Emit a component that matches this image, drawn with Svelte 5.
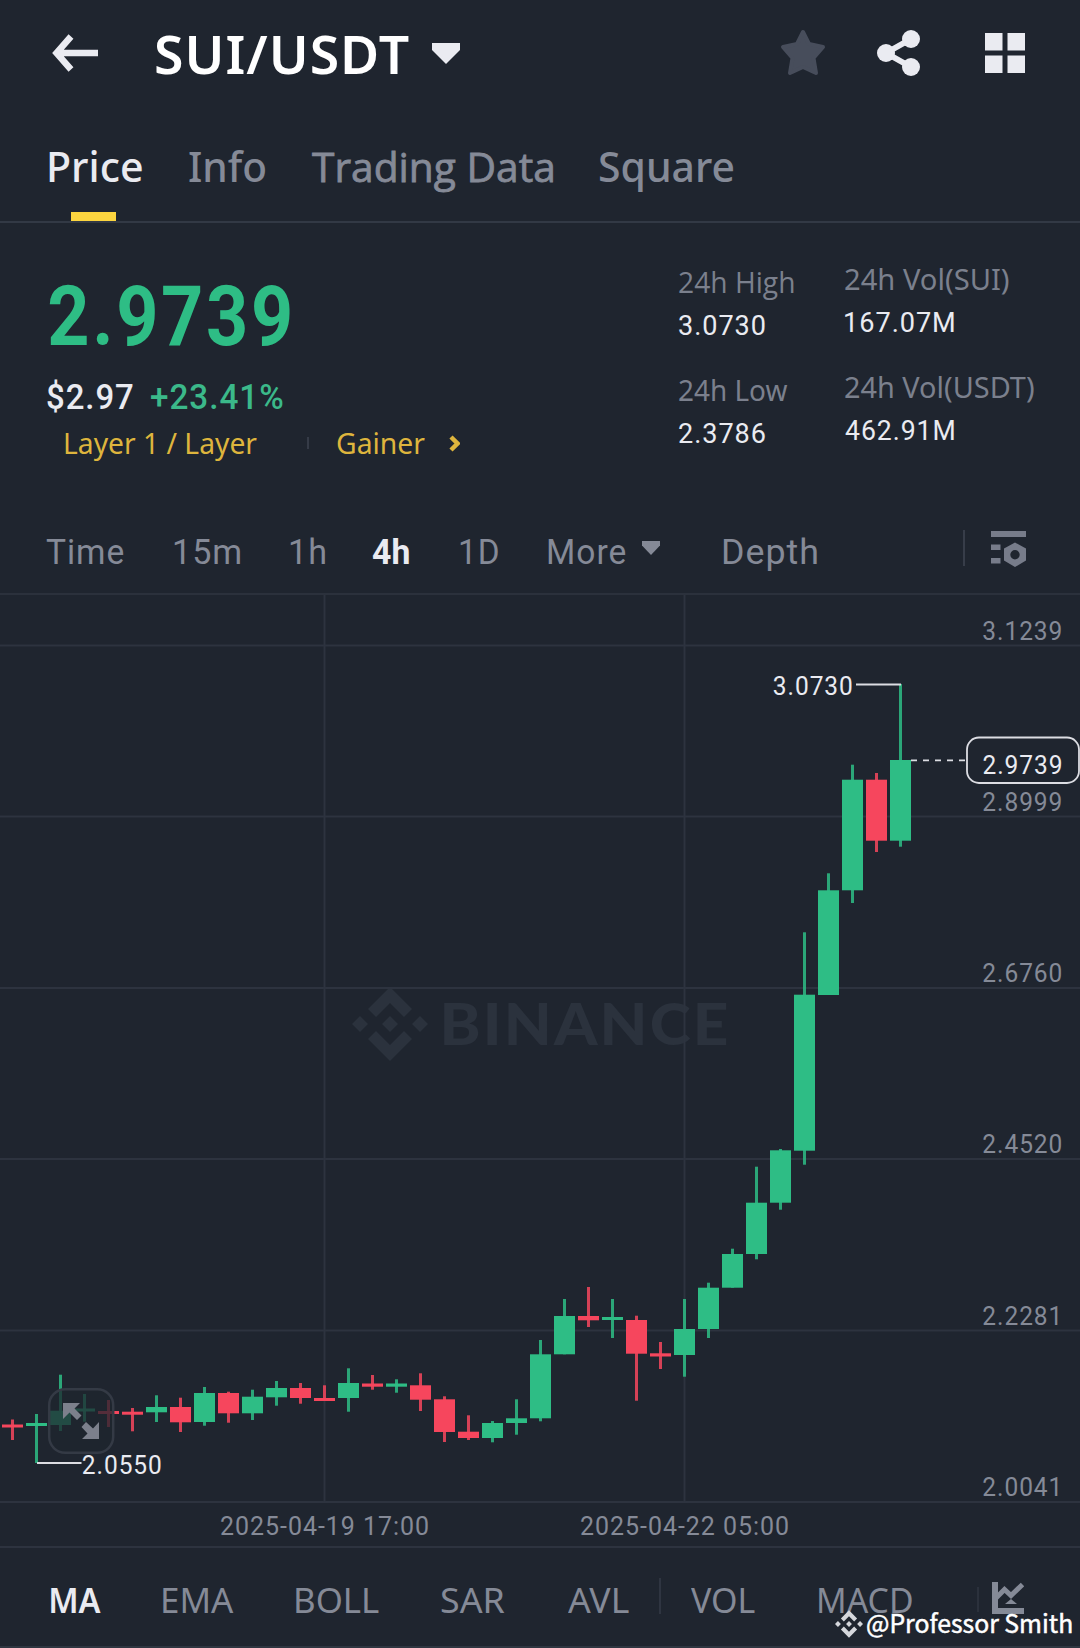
<script lang="ts">
  type Label = { text: string; width: number; open?: boolean };
  // vertical positions on the chart canvas: high, body top, body bottom, low
  type Candle = [number, number, number, number, "up" | "down"];

  const tabs: Label[] = [
    { text: "Price", width: 93 },
    { text: "Info", width: 76 },
    { text: "Trading Data", width: 241, open: true },
    { text: "Square", width: 133.5 },
  ];

  const stats: { label: Label; value: Label }[][] = [
    [
      { label: { text: "24h High", width: 115, open: true }, value: { text: "3.0730", width: 86 } },
      { label: { text: "24h Low", width: 109 }, value: { text: "2.3786", width: 86 } },
    ],
    [
      { label: { text: "24h Vol(SUI)", width: 164 }, value: { text: "167.07M", width: 109 } },
      { label: { text: "24h Vol(USDT)", width: 189 }, value: { text: "462.91M", width: 109 } },
    ],
  ];

  const intervals: Label[] = [
    { text: "Time", width: 78 },
    { text: "15m", width: 66 },
    { text: "1h", width: 35 },
    { text: "4h", width: 37 },
    { text: "1D", width: 38 },
    { text: "More", width: 78 },
  ];

  const indicators: Label[] = [
    { text: "MA", width: 50 },
    { text: "EMA", width: 71 },
    { text: "BOLL", width: 83 },
    { text: "SAR", width: 64 },
    { text: "AVL", width: 61 },
    { text: "VOL", width: 64 },
    { text: "MACD", width: 93 },
  ];

  const levels = [
    { price: "3.1239", y: 645.5 },
    { price: "2.8999", y: 816.5 },
    { price: "2.6760", y: 988 },
    { price: "2.4520", y: 1159 },
    { price: "2.2281", y: 1330.5 },
    { price: "2.0041", y: 1502 },
  ];

  const dates = [
    { text: "2025-04-19 17:00", x: 324.5 },
    { text: "2025-04-22 05:00", x: 684.5 },
  ];

  const candles: Candle[] = [
    [1419.5, 1424.5, 1427.5, 1440, "down"],
    [1414, 1423, 1426, 1463, "up"],
    [1374.7, 1410.7, 1425, 1431, "up"],
    [1394, 1408.5, 1411.5, 1421.7, "up"],
    [1400, 1411, 1414, 1427, "down"],
    [1408, 1411.7, 1414.7, 1431.3, "down"],
    [1395.3, 1407, 1412.3, 1422, "up"],
    [1397.7, 1407, 1422.3, 1432, "down"],
    [1387, 1393, 1422, 1425.7, "up"],
    [1391.7, 1393, 1413.3, 1422.7, "down"],
    [1389.7, 1396.7, 1413.3, 1420, "up"],
    [1381, 1388, 1397.3, 1405.7, "up"],
    [1383, 1388, 1398, 1403.7, "down"],
    [1385.3, 1398, 1401, 1401, "down"],
    [1368.3, 1383, 1398, 1411.7, "up"],
    [1375, 1383.5, 1386.7, 1389.7, "down"],
    [1379.3, 1383.5, 1386.7, 1392.7, "up"],
    [1373.3, 1385.3, 1399.7, 1411, "down"],
    [1396.3, 1399.3, 1432, 1442, "down"],
    [1415.3, 1431.7, 1438, 1440, "down"],
    [1421, 1423, 1438, 1442.3, "up"],
    [1399.3, 1418.3, 1423, 1434.7, "up"],
    [1340, 1354.3, 1418.3, 1421.3, "up"],
    [1299, 1316, 1354.3, 1354.3, "up"],
    [1287, 1316, 1320.3, 1327, "down"],
    [1299, 1317, 1320, 1338, "up"],
    [1315.7, 1320, 1353.7, 1400.7, "down"],
    [1342, 1353.3, 1356.5, 1369, "down"],
    [1299, 1329, 1355, 1376.7, "up"],
    [1282.7, 1287.7, 1329, 1338, "up"],
    [1248.7, 1254, 1287.7, 1287.7, "up"],
    [1166.7, 1202.7, 1254, 1259.3, "up"],
    [1149, 1150.3, 1202.7, 1209.7, "up"],
    [932.3, 994.7, 1150.7, 1164.7, "up"],
    [873.3, 890.3, 995, 995, "up"],
    [764.7, 779.7, 890.3, 903, "up"],
    [773, 779.7, 840.7, 852, "down"],
    [684, 760, 840.7, 846.7, "up"],
  ];

  // Squeeze a label so its visible ink is exactly `width` wide
  const fit = (node: HTMLElement, width: number) => {
    const css = getComputedStyle(node);
    const ctx = document.createElement("canvas").getContext("2d")!;
    ctx.font = `${css.fontWeight} ${css.fontSize} ${css.fontFamily}`;
    ctx.letterSpacing = css.letterSpacing === "normal" ? "0px" : css.letterSpacing;
    const { actualBoundingBoxLeft: left, actualBoundingBoxRight: right } =
      ctx.measureText(node.textContent ?? "");
    const scale = width / (left + right);
    node.style.width = `${width}px`;
    node.style.transform = `translateX(${left * scale}px) scaleX(${scale})`;
  };
</script>

{#snippet logo()}
  <path d="M38 0 60 22 52 30 38 16 24 30 16 22ZM38 74 60 52 52 44 38 58 24 44 16 52ZM38 29 46 37 38 45 30 37ZM8 29 16 37 8 45 0 37ZM68 29 76 37 68 45 60 37Z" />
{/snippet}

<main>
  <header>
    <svg class="back" width="46" height="38" viewBox="0 0 46 38">
      <path d="M19 2.500 4.500 19 19 35.500M4.500 19H46" />
    </svg>
    <h1><span class="fit" use:fit={253}>SUI/USDT</span></h1>
    <svg class="caret" width="28" height="21" viewBox="0 0 28 21"><path d="M0 0H28V7L14 21 0 7Z" /></svg>
    <div class="actions">
      <svg class="star" width="46" height="48" viewBox="0 0 46 48">
        <path d="M23 3 29 15 43 18 33.500 29 36 44 23 38 10 44 12.500 29 3 18 17 15Z" />
      </svg>
      <svg class="share" width="43" height="46" viewBox="0 0 43 46">
        <path d="M9 23 34 9M9 23 34 37" />
        <circle cx="9" cy="23" r="9" />
        <circle cx="34" cy="9" r="9" />
        <circle cx="34" cy="37" r="9" />
      </svg>
      <svg width="40" height="40" viewBox="0 0 40 40">
        <path d="M0 0H17.500V17.500H0ZM22.500 0H40V17.500H22.500ZM0 22.500H17.500V40H0ZM22.500 22.500H40V40H22.500Z" />
      </svg>
    </div>
  </header>

  <nav class="tabs">
    {#each tabs as { text, width, open }, i}
      <div class="tab" class:active={i === 0}>
        <span class="fit" class:open use:fit={width}>{text}</span>
      </div>
    {/each}
  </nav>

  <section class="summary">
    <div class="quote">
      <div class="price"><span class="fit" use:fit={241}>2.9739</span></div>
      <div class="change">
        <span class="fit" use:fit={86}>$2.97</span>
        <span class="fit up" use:fit={132}>+23.41%</span>
      </div>
      <div class="tags">
        <span class="fit" use:fit={192}>Layer 1 / Layer</span>
        <i></i>
        <span class="fit" use:fit={88}>Gainer</span>
        <svg width="11" height="17" viewBox="0 0 11 17"><path d="M2 2 8.500 8.500 2 15" /></svg>
      </div>
    </div>
    <div class="stats">
      {#each stats as column}
        <dl>
          {#each column as { label, value }}
            <dt><span class="fit" class:open={label.open} use:fit={label.width}>{label.text}</span></dt>
            <dd><span class="fit" use:fit={value.width}>{value.text}</span></dd>
          {/each}
        </dl>
      {/each}
    </div>
  </section>

  <nav class="intervals">
    {#each intervals as { text, width }}
      <div class="interval" class:active={text === "4h"}>
        <span class="fit" use:fit={width}>{text}</span>
      </div>
    {/each}
    <svg class="more" width="18" height="14" viewBox="0 0 18 14"><path d="M0 0H18V4.500L9 14 0 4.500Z" /></svg>
    <div class="interval"><span class="fit" use:fit={94}>Depth</span></div>
    <i></i>
    <svg class="settings" width="35" height="36" viewBox="0 0 35 36">
      <path d="M0 0H35V6H0ZM0 13.500H9.500V19H0ZM0 27H9.500V32.500H0Z" />
      <path
        fill-rule="evenodd"
        d="M24 11.500 35 17.500V29.500L24 36 13 29.500V17.500ZM24 19A4.700 4.700 0 1 0 24 28.400 4.700 4.700 0 1 0 24 19Z"
      />
    </svg>
  </nav>

  <section class="chart">
    <svg width="1080" height="953" viewBox="0 595 1080 953">
      <g class="watermark">
        <g transform="translate(352 987)">{@render logo()}</g>
        <text x="439.500" y="1044.500" textLength="291" lengthAdjust="spacingAndGlyphs">BINANCE</text>
      </g>

      <g class="grid">
        {#each levels as { y }}
          <line x1="0" x2="1080" y1={y} y2={y} />
        {/each}
        {#each dates as { x }}
          <line x1={x} x2={x} y1="595" y2="1502" />
        {/each}
        <line x1="0" x2="1080" y1="1547" y2="1547" />
      </g>

      {#each candles as [high, top, bottom, low, side], i}
        <g class={side}>
          <rect x={i * 24 + 11} y={high} width="3" height={low - high} class="wick" />
          <rect x={i * 24 + 2} y={top} width="21" height={bottom - top} />
        </g>
      {/each}

      <g class="axis">
        {#each levels as { price, y }}
          <text x="982.300" y={y - 5.7} textLength="81" lengthAdjust="spacingAndGlyphs">{price}</text>
        {/each}
        {#each dates as { text, x }}
          <text x={x - 104.500} y="1535" textLength="210" lengthAdjust="spacingAndGlyphs">{text}</text>
        {/each}
      </g>

      <g class="marks">
        <text x="772.800" y="694.700" textLength="81" lengthAdjust="spacingAndGlyphs">3.0730</text>
        <path d="M856 684.500H901M37 1463H81.500" />
        <text x="81.800" y="1474" textLength="81" lengthAdjust="spacingAndGlyphs">2.0550</text>
        <path d="M911 760.300H966" stroke-dasharray="6 6" />
        <rect x="967" y="737.500" width="112" height="45.500" rx="12" />
        <text x="982.500" y="774" textLength="81" lengthAdjust="spacingAndGlyphs">2.9739</text>
      </g>

      <g class="expand">
        <rect x="49.200" y="1389.200" width="64" height="63.500" rx="16" />
        <path d="M63 1403H80L74.500 1408.500 81.500 1415.500 77 1420 69.500 1412.500 63 1419Z" />
        <path d="M99 1439H82L87.500 1433.500 81.500 1427 86 1422 93 1428.500 99 1422Z" />
      </g>
    </svg>
  </section>

  <footer>
    {#each indicators as { text, width }}
      <div class="indicator" class:active={text === "MA"} class:split={text === "VOL"}>
        <span class="fit" use:fit={width}>{text}</span>
      </div>
    {/each}
    <i></i>
    <svg class="trend" width="32" height="32" viewBox="0 0 32 32">
      <path d="M0 0H6V26H32V32H0Z" />
      <path class="stroke" d="M4 16 12.500 7.500 19 13.500 30.500 2.500" />
      <path d="M19 17 25 22H13Z" />
    </svg>
    <div class="credit">
      <svg width="28" height="28" viewBox="0 0 76 74">{@render logo()}</svg>
      <span class="fit" use:fit={205}>@Professor Smith</span>
    </div>
  </footer>
</main>

<style>
  :global(body) {
    background: #1f252f;
  }

  main {
    width: 1080px;
    height: 1648px;
    overflow: hidden;
    background: #1f252f;
    color: #eaebf1;
    font-family: "Noto Sans", sans-serif;
  }

  svg {
    display: block;
    flex: none;
    fill: currentColor;
  }

  .fit {
    display: inline-block;
    white-space: nowrap;
    transform-origin: 0 50%;
  }

  .open {
    font-family: "Open Sans", sans-serif;
  }

  header {
    box-sizing: border-box;
    height: 106px;
    padding: 0 55px 0 52px;
    display: flex;
    align-items: center;
  }

  .back path {
    fill: none;
    stroke: currentColor;
    stroke-width: 6.5;
  }

  h1 {
    margin: 2px 23px 0 58px;
    font-size: 53px;
    font-weight: 600;
    line-height: 70px;
    letter-spacing: 1px;
    color: #fff;
  }

  .actions {
    margin-left: auto;
    display: flex;
    align-items: center;
  }

  .star {
    color: #474d5b;
    stroke: currentColor;
    stroke-width: 4;
    stroke-linejoin: round;
  }

  .share {
    margin: 0 65px 0 51px;
    stroke: currentColor;
    stroke-width: 0;
  }

  .share path {
    stroke-width: 6;
  }

  .tabs {
    box-sizing: border-box;
    height: 117px;
    padding-left: 48.5px;
    display: flex;
    gap: 47px;
    border-bottom: 2px solid #323945;
    font-size: 41px;
    font-weight: 500;
    color: #858a97;
  }

  .tab {
    position: relative;
    padding-top: 30px;
    line-height: 60px;
  }

  .tab .open {
    -webkit-text-stroke: 0.8px currentColor;
  }

  .tab.active {
    color: #eaebf1;
  }

  .tab.active::after {
    content: "";
    position: absolute;
    left: 22.5px;
    bottom: 0;
    width: 45px;
    height: 9px;
    background: #fcd53f;
  }

  .summary {
    box-sizing: border-box;
    height: 267px;
    display: flex;
  }

  .quote {
    width: 678.5px;
    padding-top: 49px;
  }

  .price,
  .change,
  dd,
  .intervals {
    font-family: Roboto, sans-serif;
  }

  .price {
    padding-left: 49px;
    font-size: 83px;
    font-weight: 700;
    line-height: 90px;
    letter-spacing: 3px;
    color: #2ebd85;
  }

  .change {
    margin-top: 14px;
    padding-left: 46.5px;
    display: flex;
    gap: 18px;
    font-size: 35px;
    font-weight: 500;
    line-height: 44px;
    letter-spacing: 1px;
  }

  .up {
    color: #3bb98a;
  }

  .tags {
    margin-top: 3px;
    padding-left: 65px;
    display: flex;
    align-items: center;
    font-size: 29px;
    line-height: 40px;
    color: #deb53d;
  }

  .tags i {
    width: 2px;
    height: 12px;
    margin: 0 28px 0 50px;
    background: #353b47;
  }

  .tags svg {
    margin-left: 24px;
    fill: none;
    stroke: currentColor;
    stroke-width: 4.5;
  }

  .stats {
    display: flex;
    padding-top: 39px;
  }

  dl {
    width: 166px;
    margin: 0;
    font-size: 28.5px;
    line-height: 40px;
  }

  dl:last-child {
    margin-top: -3px;
  }

  dt {
    height: 40px;
    color: #7b808d;
  }

  dd {
    height: 40px;
    margin: 3.5px 0 24.5px;
    letter-spacing: 1px;
  }

  .intervals {
    box-sizing: border-box;
    height: 105px;
    padding: 21px 54px 0 45.5px;
    display: flex;
    align-items: center;
    border-bottom: 2px solid #2b313c;
    font-size: 34.5px;
    line-height: 44px;
    letter-spacing: 1px;
    color: #858a97;
  }

  .interval + .interval {
    margin-left: 50px;
  }

  .interval.active {
    margin: -1px 1.5px 0 47px !important;
    font-weight: 700;
    letter-spacing: 0;
    color: #eaebf1;
  }

  .more {
    margin: -9px 62.5px 0 16px;
  }

  .intervals i {
    width: 2px;
    height: 36px;
    margin: -8px 26px 0 auto;
    background: #373d49;
  }

  .settings {
    margin-top: -6px;
    color: #777c8a;
  }

  .grid {
    stroke: #2d333f;
    stroke-width: 2;
  }

  .watermark {
    fill: #2b323d;
    font: 900 57px Lato, sans-serif;
    letter-spacing: 2px;
  }

  g.up {
    fill: #2ebd85;
  }

  g.down {
    fill: #f6465d;
  }

  .wick {
    opacity: 0.85;
  }

  .axis,
  .marks {
    font: 26px Roboto, sans-serif;
    letter-spacing: 1px;
    fill: #858a97;
  }

  .marks {
    fill: #eaebf1;
  }

  .marks path,
  .marks rect {
    fill: none;
    stroke: #dcdde3;
    stroke-width: 1.8;
  }

  .expand rect {
    fill: rgba(31, 37, 47, 0.75);
    stroke: #343a45;
    stroke-width: 2.5;
  }

  .expand path {
    fill: #7c808c;
  }

  footer {
    position: relative;
    box-sizing: border-box;
    height: 100px;
    padding: 0 56px 0 50.5px;
    display: flex;
    align-items: center;
    border-bottom: 2px solid #2f3641;
    font-size: 35px;
    line-height: 50px;
    color: #858a97;
  }

  .indicator {
    margin-top: 6px;
  }

  .indicator + .indicator {
    margin-left: 62.3px;
  }

  .indicator + .indicator:nth-child(7) {
    margin-left: 64.5px;
  }

  .indicator.active {
    font-weight: 600;
    color: #eaebf1;
  }

  .split {
    position: relative;
  }

  .split::before {
    content: "";
    position: absolute;
    left: -32px;
    top: 3px;
    width: 2px;
    height: 36px;
    background: #2f3541;
  }

  footer i {
    width: 2px;
    height: 25px;
    margin: 4px 13px 0 auto;
    background: #2b313c;
  }

  .trend {
    margin-top: 1px;
  }

  .stroke {
    fill: none;
    stroke: currentColor;
    stroke-width: 5;
  }

  .credit {
    position: absolute;
    left: 835px;
    top: 57px;
    display: flex;
    align-items: center;
    gap: 4px;
    font: 400 25px/34px "Noto Sans CJK SC", sans-serif;
    color: #fff;
    -webkit-text-stroke: 0.5px #fff;
  }

  .credit svg {
    margin-top: 3px;
    color: #d5d7dc;
  }
</style>
